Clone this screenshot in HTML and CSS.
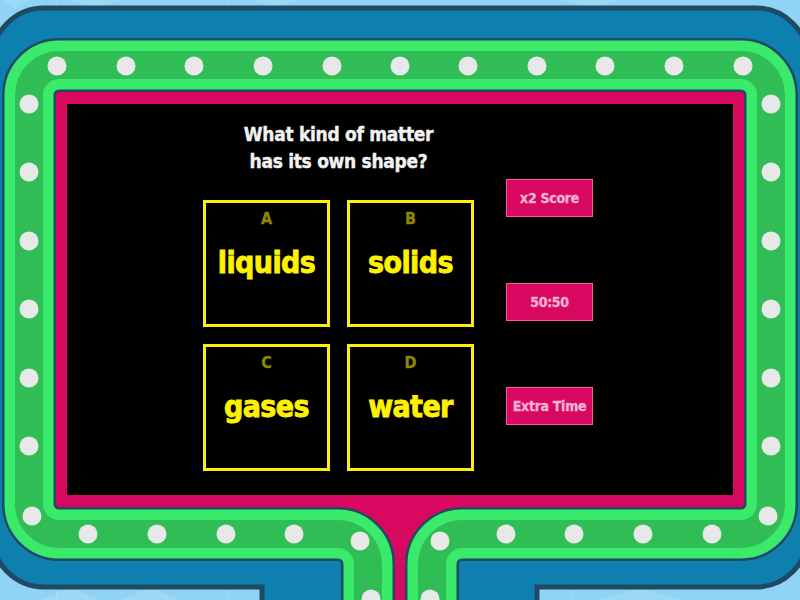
FILE: index.html
```html
<!DOCTYPE html>
<html>
<head>
<meta charset="utf-8">
<link rel="stylesheet" href="styles.css">
</head>
<body>
<div class="stage">
  <svg class="frame" width="800" height="600" viewBox="0 0 800 600" xmlns="http://www.w3.org/2000/svg">
    <g fill="#ffffff" opacity="0.12">
      <polygon points="0,0 30,0 15,8"/>
      <polygon points="70,0 120,0 95,8"/>
      <polygon points="250,0 300,0 275,8"/>
      <polygon points="560,0 620,0 590,8"/>
      <polygon points="40,600 70,588 100,600"/>
      <polygon points="120,600 150,588 180,600"/>
      <polygon points="600,600 640,588 680,600"/>
    </g>
    <g stroke="#ffffff" stroke-opacity="0.18" stroke-width="1">
      <line x1="57" y1="0" x2="57" y2="8"/>
      <line x1="228" y1="0" x2="228" y2="8"/>
      <line x1="57" y1="590" x2="57" y2="600"/>
      <line x1="228" y1="590" x2="228" y2="600"/>
      <line x1="572" y1="590" x2="572" y2="600"/>
    </g>
    <path d="M44,8 H756 A52,52 0 0 1 808,60 V535 A52,52 0 0 1 756,587 H537 V620 H262 V587 H44 A52,52 0 0 1 -8,535 V60 A52,52 0 0 1 44,8 Z"
          fill="#0e80b0" stroke="#1f4a62" stroke-width="5"/>
    <path d="M368,620 V564 A30,30 0 0 0 338,534 H59 A30,30 0 0 1 29,504 V95 A30,30 0 0 1 59,65 H741 A30,30 0 0 1 771,95 V504 A30,30 0 0 1 741,534 H462 A30,30 0 0 0 432,564 V620"
          fill="#d8075f" stroke="none"/>
    <path d="M368,620 V564 A30,30 0 0 0 338,534 H59 A30,30 0 0 1 29,504 V95 A30,30 0 0 1 59,65 H741 A30,30 0 0 1 771,95 V504 A30,30 0 0 1 741,534 H462 A30,30 0 0 0 432,564 V620"
          fill="none" stroke="#1f4a62" stroke-width="54"/>
    <path d="M368,620 V564 A30,30 0 0 0 338,534 H59 A30,30 0 0 1 29,504 V95 A30,30 0 0 1 59,65 H741 A30,30 0 0 1 771,95 V504 A30,30 0 0 1 741,534 H462 A30,30 0 0 0 432,564 V620"
          fill="none" stroke="#39ea6b" stroke-width="49"/>
    <path d="M368,620 V564 A30,30 0 0 0 338,534 H59 A30,30 0 0 1 29,504 V95 A30,30 0 0 1 59,65 H741 A30,30 0 0 1 771,95 V504 A30,30 0 0 1 741,534 H462 A30,30 0 0 0 432,564 V620"
          fill="none" stroke="#30bd56" stroke-width="28"/>
    <g fill="#e8e8e8">
      <circle cx="57" cy="66" r="9.5"/>
      <circle cx="126" cy="66" r="9.5"/>
      <circle cx="194" cy="66" r="9.5"/>
      <circle cx="263" cy="66" r="9.5"/>
      <circle cx="332" cy="66" r="9.5"/>
      <circle cx="400" cy="66" r="9.5"/>
      <circle cx="468" cy="66" r="9.5"/>
      <circle cx="537" cy="66" r="9.5"/>
      <circle cx="605" cy="66" r="9.5"/>
      <circle cx="674" cy="66" r="9.5"/>
      <circle cx="743" cy="66" r="9.5"/>
      <circle cx="29" cy="104" r="9.5"/>
      <circle cx="29" cy="172" r="9.5"/>
      <circle cx="29" cy="241" r="9.5"/>
      <circle cx="29" cy="309" r="9.5"/>
      <circle cx="29" cy="378" r="9.5"/>
      <circle cx="29" cy="446" r="9.5"/>
      <circle cx="32" cy="516" r="9.5"/>
      <circle cx="771" cy="104" r="9.5"/>
      <circle cx="771" cy="172" r="9.5"/>
      <circle cx="771" cy="241" r="9.5"/>
      <circle cx="771" cy="309" r="9.5"/>
      <circle cx="771" cy="378" r="9.5"/>
      <circle cx="771" cy="446" r="9.5"/>
      <circle cx="768" cy="516" r="9.5"/>
      <circle cx="88" cy="534" r="9.5"/>
      <circle cx="157" cy="534" r="9.5"/>
      <circle cx="226" cy="534" r="9.5"/>
      <circle cx="294" cy="534" r="9.5"/>
      <circle cx="360" cy="541" r="9.5"/>
      <circle cx="371" cy="599" r="9.5"/>
      <circle cx="440" cy="541" r="9.5"/>
      <circle cx="506" cy="534" r="9.5"/>
      <circle cx="574" cy="534" r="9.5"/>
      <circle cx="643" cy="534" r="9.5"/>
      <circle cx="712" cy="534" r="9.5"/>
      <circle cx="430" cy="599" r="9.5"/>
    </g>
  </svg>

  <div class="panel">
    <div class="quiz">
      <div class="question">What kind of matter<br>has its own shape?</div>
      <div class="answers">
        <div class="answer"><span class="letter">A</span><span class="text">liquids</span></div>
        <div class="answer"><span class="letter">B</span><span class="text">solids</span></div>
        <div class="answer"><span class="letter">C</span><span class="text">gases</span></div>
        <div class="answer"><span class="letter">D</span><span class="text">water</span></div>
      </div>
    </div>
    <div class="powerups">
      <div class="power">x2 Score</div>
      <div class="power">50:50</div>
      <div class="power">Extra Time</div>
    </div>
  </div>
</div>
</body>
</html>
```

FILE: styles.css
```css
html, body {
  margin: 0;
  padding: 0;
  background: #8fd4f4;
}

.stage {
  position: relative;
  width: 800px;
  height: 600px;
  overflow: hidden;
  box-sizing: border-box;
  padding: 104px 67px 0 67px;
  background: #8fd4f4;
  font-family: "DejaVu Sans Condensed", "DejaVu Sans", sans-serif;
  font-stretch: condensed;
  font-weight: bold;
}

.frame {
  position: absolute;
  left: 0;
  top: 0;
}

.panel {
  position: relative;
  width: 666px;
  height: 391px;
  background: #000000;
  display: flex;
  flex-direction: row;
  box-sizing: border-box;
  padding-left: 136px;
  gap: 32px;
}

.quiz {
  width: 271px;
  display: flex;
  flex-direction: column;
  align-items: center;
  padding-top: 17px;
}

.question {
  color: #f2f2f2;
  font-size: 19px;
  line-height: 27px;
  text-align: center;
  letter-spacing: -0.3px;
  -webkit-text-stroke: 0.4px #f2f2f2;
}

.answers {
  margin-top: 25px;
  display: grid;
  grid-template-columns: 127px 127px;
  grid-template-rows: 127px 127px;
  column-gap: 17px;
  row-gap: 17px;
}

.answer {
  box-sizing: border-box;
  border: 3px solid #fff200;
  display: flex;
  flex-direction: column;
  align-items: center;
  padding-top: 6px;
}

.letter {
  color: #8c8800;
  font-size: 16px;
  line-height: 20px;
  -webkit-text-stroke: 0.3px #8c8800;
}

.text {
  color: #fff200;
  font-size: 30px;
  line-height: 36px;
  margin-top: 16px;
  letter-spacing: -0.6px;
  -webkit-text-stroke: 0.8px #fff200;
}

.powerups {
  width: 87px;
  display: flex;
  flex-direction: column;
  gap: 66px;
  padding-top: 75px;
}

.power {
  box-sizing: border-box;
  height: 38px;
  background: #d8075f;
  border: 1px solid #f0609c;
  color: #f8b4d2;
  font-size: 14px;
  display: flex;
  align-items: center;
  justify-content: center;
  white-space: nowrap;
  letter-spacing: -0.3px;
  -webkit-text-stroke: 0.3px #f8b4d2;
}
```
